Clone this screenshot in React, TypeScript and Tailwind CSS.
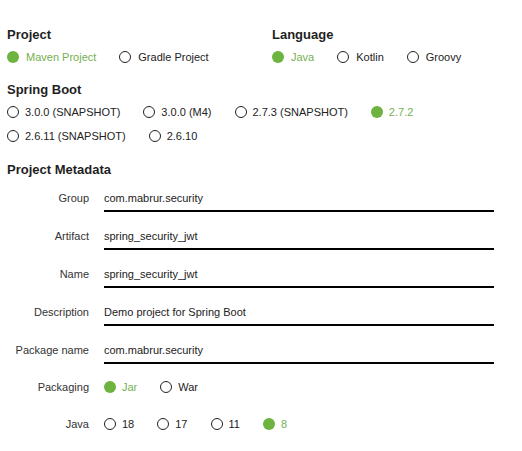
import React from 'react';

type Opt = { label: string; checked?: boolean };

const Radio = ({ label, checked, gap = 'gap-[7px]' }: Opt & { gap?: string }) => (
  <div className={`flex items-center ${gap}`}>
    {checked ? (
      <span className="w-[12px] h-[12px] rounded-full bg-[#6db33f]" />
    ) : (
      <span className="w-[12px] h-[12px] rounded-full border-[1.5px] border-[#222]" />
    )}
    <span className={checked ? 'text-[#74b04f]' : 'text-[#222]'}>{label}</span>
  </div>
);

const RadioRow = ({ options, gap }: { options: Opt[]; gap?: string }) => (
  <div className="flex items-center gap-[23px] h-[24px] text-[11px]">
    {options.map((o) => (
      <Radio key={o.label} {...o} gap={gap} />
    ))}
  </div>
);

const Heading = ({ children }: { children: React.ReactNode }) => (
  <h2 className="h-[20px] flex items-center text-[13px] font-bold text-[#1f1f1f]">{children}</h2>
);

const Field = ({ label, value }: { label: string; value: string }) => (
  <div className="flex items-start h-[26px] mb-[12px]">
    <div className="w-[82px] h-[24px] flex items-center justify-end text-[11px] text-[#333]">{label}</div>
    <div className="ml-[15px] w-[390px] h-[26px] border-b-2 border-black flex items-center text-[11px] text-[#222]">
      {value}
    </div>
  </div>
);

const OptionField = ({ label, options }: { label: string; options: Opt[] }) => (
  <div className="flex items-center h-[24px]">
    <div className="w-[82px] text-right text-[11px] text-[#333]">{label}</div>
    <div className="ml-[15px]">
      <RadioRow options={options} gap="gap-[6px]" />
    </div>
  </div>
);

export default function App() {
  return (
    <div
      className="w-[522px] h-[451px] bg-white pl-[7px] pt-[25px]"
      style={{ fontFamily: '"Liberation Sans", Arial, sans-serif' }}
    >
      <div className="flex">
        <div className="w-[265px]">
          <Heading>Project</Heading>
          <RadioRow options={[{ label: 'Maven Project', checked: true }, { label: 'Gradle Project' }]} />
        </div>
        <div>
          <Heading>Language</Heading>
          <RadioRow options={[{ label: 'Java', checked: true }, { label: 'Kotlin' }, { label: 'Groovy' }]} />
        </div>
      </div>

      <div className="mt-[11px]">
        <Heading>Spring Boot</Heading>
        <RadioRow
          gap="gap-[6px]"
          options={[
            { label: '3.0.0 (SNAPSHOT)' },
            { label: '3.0.0 (M4)' },
            { label: '2.7.3 (SNAPSHOT)' },
            { label: '2.7.2', checked: true },
          ]}
        />
        <RadioRow gap="gap-[6px]" options={[{ label: '2.6.11 (SNAPSHOT)' }, { label: '2.6.10' }]} />
      </div>

      <div className="mt-[12px]">
        <Heading>Project Metadata</Heading>
        <div className="mt-[6px]">
          <Field label="Group" value="com.mabrur.security" />
          <Field label="Artifact" value="spring_security_jwt" />
          <Field label="Name" value="spring_security_jwt" />
          <Field label="Description" value="Demo project for Spring Boot" />
          <Field label="Package name" value="com.mabrur.security" />
        </div>
        <div className="mt-[-1px]">
          <OptionField label="Packaging" options={[{ label: 'Jar', checked: true }, { label: 'War' }]} />
        </div>
        <div className="mt-[13px]">
          <OptionField
            label="Java"
            options={[{ label: '18' }, { label: '17' }, { label: '11' }, { label: '8', checked: true }]}
          />
        </div>
      </div>
    </div>
  );
}
